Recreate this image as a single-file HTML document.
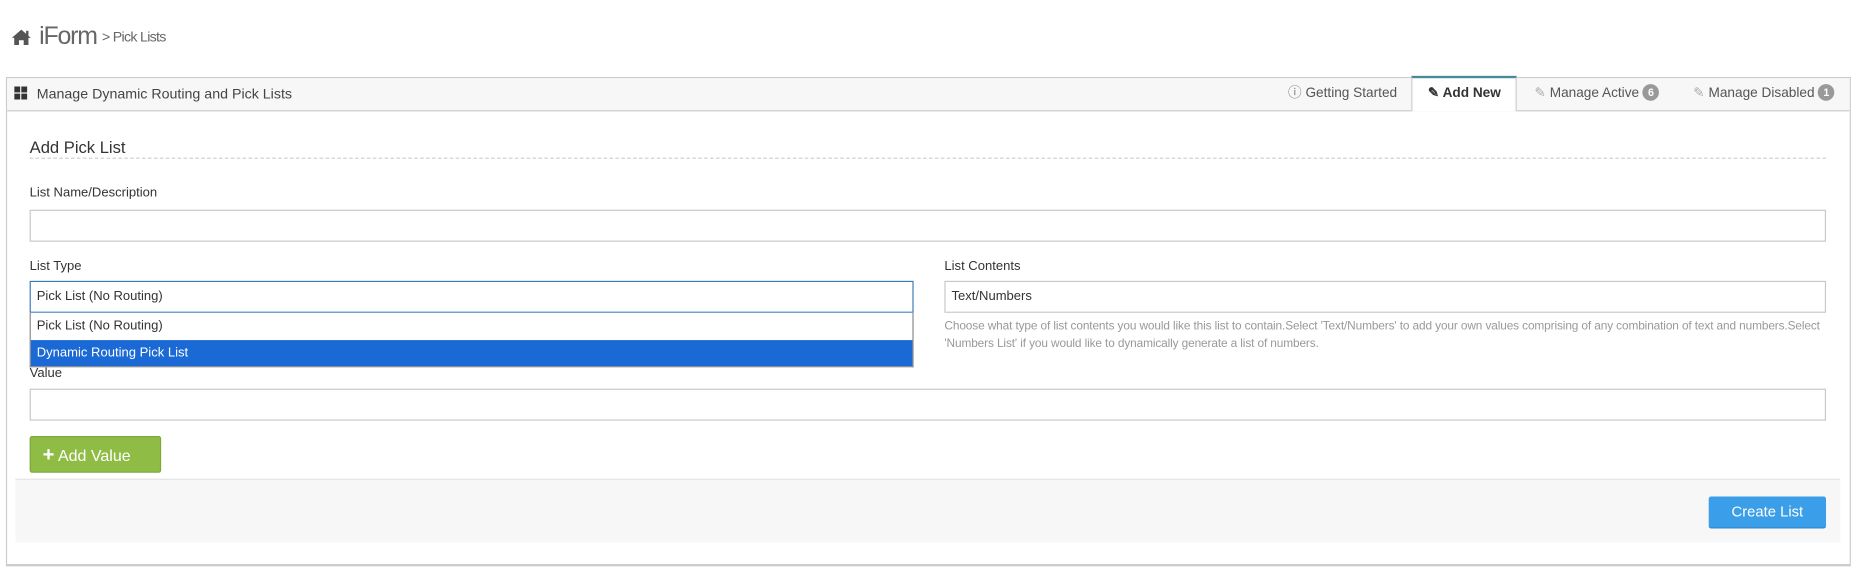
<!DOCTYPE html>
<html><head><meta charset="utf-8"><style>
html,body{margin:0;padding:0;background:#fff;width:1858px;height:572px;overflow:hidden}
#w{position:absolute;left:0;top:0;width:1568px;height:483px;transform:scale(1.18495);transform-origin:0 0;font-family:"Liberation Sans",sans-serif;color:#333}
.a{position:absolute}
.inp{position:absolute;border:1px solid #c8c8c8;background:#fff;box-sizing:border-box}
.lbl{position:absolute;font-size:11px;color:#333}
.tab{position:absolute;top:66px;height:27px;line-height:26px;font-size:11.5px;color:#555}
.badge{display:inline-block;width:14px;height:14px;border-radius:7px;background:#999;color:#fff;font-size:9px;line-height:14px;text-align:center;font-weight:bold;vertical-align:1px;margin-left:3px}
</style></head><body><div id="w">
<svg class="a" style="left:9px;top:24px" width="18" height="15" viewBox="0 0 18 15"><path d="M9 1 L1 8 L3 8 L3 14 L7 14 L7 10 L11 10 L11 14 L15 14 L15 8 L17 8 Z" fill="#555"/><rect x="13" y="2" width="2" height="4" fill="#555"/></svg>
<div class="a" style="left:33px;top:19px;font-size:21px;color:#666;letter-spacing:-1px">iForm</div>
<div class="a" style="left:86px;top:24px;font-size:12px;color:#666;letter-spacing:-0.6px">&gt; Pick Lists</div>

<div class="a" style="left:5px;top:65px;width:1557px;height:413px;border:1px solid #ccc;border-bottom:2px solid #ccc;box-sizing:border-box"></div>
<div class="a" style="left:6px;top:66px;width:1555px;height:27px;background:#f7f7f7;border-bottom:1px solid #ccc"></div>
<svg class="a" style="left:12px;top:73px" width="11" height="11"><rect x="0" y="0" width="5" height="5" fill="#333"/><rect x="6" y="0" width="5" height="5" fill="#333"/><rect x="0" y="6" width="5" height="5" fill="#333"/><rect x="6" y="6" width="5" height="5" fill="#333"/></svg>
<div class="a" style="left:31px;top:72px;font-size:12px;color:#444">Manage Dynamic Routing and Pick Lists</div>

<div class="tab" style="left:1087px"><span style="color:#777">&#9432;</span> Getting Started</div>
<div class="a" style="left:1191px;top:64px;width:89px;height:30px;background:#fff;border-top:2px solid #4a8a9a;border-left:1px solid #ccc;border-right:1px solid #ccc;box-sizing:border-box"></div>
<div class="tab" style="left:1205px;color:#333;font-weight:bold">&#9998; Add New</div>
<div class="tab" style="left:1295px"><span style="color:#aaa">&#9998;</span> Manage Active<span class="badge">6</span></div>
<div class="tab" style="left:1429px"><span style="color:#aaa">&#9998;</span> Manage Disabled<span class="badge">1</span></div>

<div class="a" style="left:25px;top:116px;font-size:14px;color:#333">Add Pick List</div>
<div class="a" style="left:25px;top:133px;width:1516px;border-top:1px dashed #ccc"></div>

<div class="lbl" style="left:25px;top:157px">List Name/Description</div>
<div class="inp" style="left:25px;top:177px;width:1516px;height:27px"></div>

<div class="lbl" style="left:25px;top:219px">List Type</div>
<div class="inp" style="left:25px;top:237px;width:746px;height:27px;border-color:#3d7ab8;font-size:11px;line-height:25px;padding-left:5px">Pick List (No Routing)</div>
<div class="a" style="left:25px;top:264px;width:746px;height:46px;border:1px solid #888;border-top:none;box-sizing:border-box;background:#fff"></div>
<div class="a" style="left:31px;top:269px;font-size:11px">Pick List (No Routing)</div>
<div class="a" style="left:26px;top:287px;width:744px;height:22px;background:#1a69d4;color:#fff;font-size:11px;line-height:22px;padding-left:5px;box-sizing:border-box">Dynamic Routing Pick List</div>

<div class="lbl" style="left:797px;top:219px">List Contents</div>
<div class="inp" style="left:797px;top:237px;width:744px;height:27px;font-size:11px;line-height:25px;padding-left:5px">Text/Numbers</div>
<div class="a" style="left:797px;top:268px;font-size:10px;color:#999;line-height:15px;white-space:nowrap;letter-spacing:-0.1px">Choose what type of list contents you would like this list to contain.Select 'Text/Numbers' to add your own values comprising of any combination of text and numbers.Select<br>'Numbers List' if you would like to dynamically generate a list of numbers.</div>

<div class="lbl" style="left:25px;top:309px">Value</div>
<div class="inp" style="left:25px;top:328px;width:1516px;height:27px"></div>

<div class="a" style="left:25px;top:368px;width:111px;height:31px;background:#8fbc45;border:1px solid #7ea93a;box-sizing:border-box;border-radius:2px;color:#fff;font-size:13.5px;line-height:29px;padding-left:10px"><b style="font-size:17px">+</b> Add Value</div>

<div class="a" style="left:13px;top:404px;width:1540px;height:53px;background:#f7f7f7;border-top:1px solid #e4e4e4"></div>
<div class="a" style="left:1442px;top:419px;width:99px;height:27px;background:#3a9ee8;border-bottom:1px solid #2c88d0;box-sizing:border-box;border-radius:2px;color:#fff;font-size:12.5px;line-height:26px;text-align:center">Create List</div>
</div></body></html>
